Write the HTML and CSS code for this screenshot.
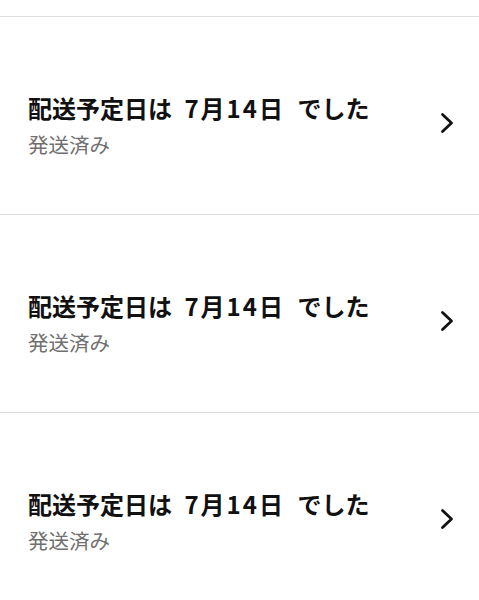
FILE: index.html
```html
<!DOCTYPE html>
<html lang="ja">
<head>
    <meta charset="utf-8" />
    <title>配送状況</title>
    <link rel="stylesheet" href="styles.css">
</head>
<body>
    <!-- 配送履歴リスト -->
    <ul class="order-list">
        <li class="order-item">
            <div class="order-text">
                <p class="order-title">配送予定日は <span class="order-date">7月14日</span> でした</p>
                <p class="order-status">発送済み</p>
            </div>
            <svg class="chevron" width="24" height="24" viewBox="0 0 24 24">
                <path d="M7.5 3.5 L16.5 12 L7.5 20.5" />
            </svg>
        </li>
        <li class="order-item">
            <div class="order-text">
                <p class="order-title">配送予定日は <span class="order-date">7月14日</span> でした</p>
                <p class="order-status">発送済み</p>
            </div>
            <svg class="chevron" width="24" height="24" viewBox="0 0 24 24">
                <path d="M7.5 3.5 L16.5 12 L7.5 20.5" />
            </svg>
        </li>
        <li class="order-item">
            <div class="order-text">
                <p class="order-title">配送予定日は <span class="order-date">7月14日</span> でした</p>
                <p class="order-status">発送済み</p>
            </div>
            <svg class="chevron" width="24" height="24" viewBox="0 0 24 24">
                <path d="M7.5 3.5 L16.5 12 L7.5 20.5" />
            </svg>
        </li>
    </ul>
</body>
</html>
```

FILE: styles.css
```css
/* 全体 */
body {
    margin: 0;
    background-color: #ffffff;
    font-family: "Noto Sans CJK JP", "Noto Sans", sans-serif;
    color: #1a1a1a;
}

/* リスト */
.order-list {
    list-style: none;
    margin: 0;
    padding: 16px 0 0;
}

.order-item {
    display: flex;
    align-items: center;
    padding: 75px 20px 56px 28px;
    border-top: 1px solid #dedede;
}

.order-text {
    flex: 1;
}

.order-title {
    margin: 0;
    font-size: 24px;
    line-height: 32px;
    font-weight: 700;
    color: #111;
    word-spacing: 7px;
}

/* 日付は数字の間隔を少し広げる */
.order-date {
    letter-spacing: 2px;
}

.order-status {
    margin: 6px 0 0;
    font-size: 20.5px;
    line-height: 28px;
    color: #707070;
}

/* 右矢印 */
.chevron {
    flex-shrink: 0;
    margin-bottom: 5px;
}

.chevron path {
    fill: none;
    stroke: #111;
    stroke-width: 2.8;
    stroke-linecap: round;
    stroke-linejoin: round;
}
```
